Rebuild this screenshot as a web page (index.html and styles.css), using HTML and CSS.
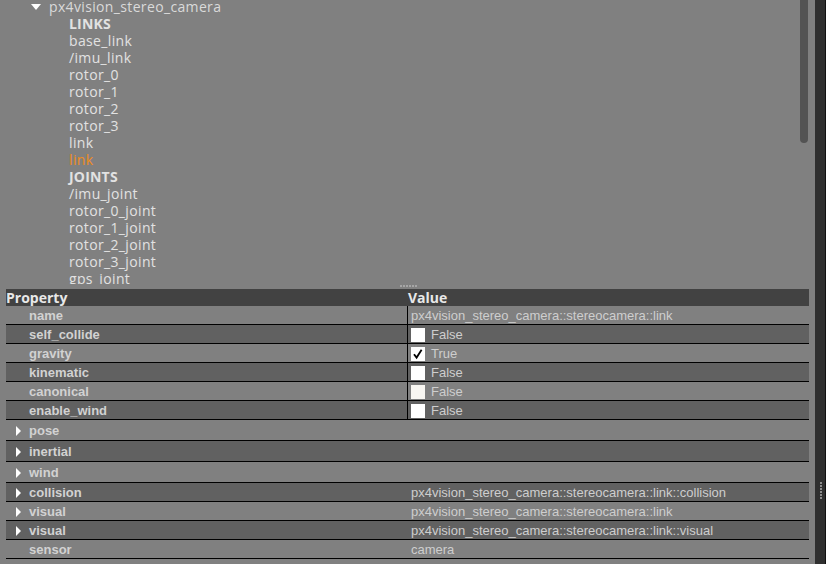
FILE: index.html
```html
<!DOCTYPE html>
<html lang="en">
    <head>
        <meta charset="UTF-8">
        <title> Model editor </title>
        <link rel="stylesheet" href="styles.css">
    </head>

    <body>
        <div class="window">
            <div class="main">
                <div class="tree">
                    <ul class="tree-list">
                        <li class="model"><span class="caret"></span>px4vision_stereo_camera</li>
                        <li class="item heading">LINKS</li>
                        <li class="item">base_link</li>
                        <li class="item">/imu_link</li>
                        <li class="item">rotor_0</li>
                        <li class="item">rotor_1</li>
                        <li class="item">rotor_2</li>
                        <li class="item">rotor_3</li>
                        <li class="item">link</li>
                        <li class="item selected">link</li>
                        <li class="item heading">JOINTS</li>
                        <li class="item">/imu_joint</li>
                        <li class="item">rotor_0_joint</li>
                        <li class="item">rotor_1_joint</li>
                        <li class="item">rotor_2_joint</li>
                        <li class="item">rotor_3_joint</li>
                        <li class="item">gps_joint</li>
                    </ul>
                    <div class="scroll-thumb"></div>
                </div>

                <div class="splitter"><span class="grip"></span></div>

                <div class="props">
                    <div class="prop-head">
                        <div class="col-name">Property</div>
                        <div class="col-value">Value</div>
                    </div>

                    <div class="prop-row split">
                        <div class="col-name">name</div>
                        <div class="col-value">px4vision_stereo_camera::stereocamera::link</div>
                    </div>
                    <div class="prop-row split dark">
                        <div class="col-name">self_collide</div>
                        <div class="col-value"><span class="check"></span>False</div>
                    </div>
                    <div class="prop-row split">
                        <div class="col-name">gravity</div>
                        <div class="col-value">
                            <span class="check">
                                <svg width="14" height="14" viewBox="0 0 14 14"><path d="M3 7.2 L5.6 10.6 L10.6 2.8" fill="none" stroke="#000" stroke-width="1.8"/></svg>
                            </span>True
                        </div>
                    </div>
                    <div class="prop-row split dark">
                        <div class="col-name">kinematic</div>
                        <div class="col-value"><span class="check"></span>False</div>
                    </div>
                    <div class="prop-row split">
                        <div class="col-name">canonical</div>
                        <div class="col-value"><span class="check off"></span>False</div>
                    </div>
                    <div class="prop-row split dark">
                        <div class="col-name">enable_wind</div>
                        <div class="col-value"><span class="check"></span>False</div>
                    </div>

                    <div class="prop-row group">
                        <div class="col-name"><span class="arrow"></span>pose</div>
                        <div class="col-value"></div>
                    </div>
                    <div class="prop-row group dark">
                        <div class="col-name"><span class="arrow"></span>inertial</div>
                        <div class="col-value"></div>
                    </div>
                    <div class="prop-row group">
                        <div class="col-name"><span class="arrow"></span>wind</div>
                        <div class="col-value"></div>
                    </div>
                    <div class="prop-row dark">
                        <div class="col-name"><span class="arrow"></span>collision</div>
                        <div class="col-value">px4vision_stereo_camera::stereocamera::link::collision</div>
                    </div>
                    <div class="prop-row">
                        <div class="col-name"><span class="arrow"></span>visual</div>
                        <div class="col-value">px4vision_stereo_camera::stereocamera::link</div>
                    </div>
                    <div class="prop-row dark">
                        <div class="col-name"><span class="arrow"></span>visual</div>
                        <div class="col-value">px4vision_stereo_camera::stereocamera::link::visual</div>
                    </div>
                    <div class="prop-row">
                        <div class="col-name">sensor</div>
                        <div class="col-value">camera</div>
                    </div>
                </div>
            </div>

            <div class="side"><span class="side-grip"></span></div>
        </div>
    </body>
</html>
```

FILE: styles.css
```css
* {
    padding: 0;
    margin: 0;
    box-sizing: border-box;
}

body {
    background: #808080;
    width: 826px;
    height: 564px;
    overflow: hidden;
}

.window {
    display: flex;
    height: 564px;
}

.main {
    width: 815px;
    display: flex;
    flex-direction: column;
}

/* model tree */

.tree {
    position: relative;
    height: 284px;
    overflow: hidden;
}

.tree-list {
    list-style: none;
    margin-top: -2px;
    font-family: "Open Sans", "DejaVu Sans", sans-serif;
    font-size: 14px;
    letter-spacing: 0.35px;
    line-height: 17px;
    color: #e2e2e2;
}

.model {
    display: flex;
    align-items: center;
    padding-left: 31px;
    color: #dadada;
}

.caret {
    width: 0;
    height: 0;
    border-top: 6px solid #fff;
    border-left: 5px solid transparent;
    border-right: 5px solid transparent;
    margin-right: 8px;
    margin-top: 1px;
}

.item {
    padding-left: 69px;
}

.item.heading {
    font-weight: bold;
    letter-spacing: 0.2px;
}

.item.selected {
    color: #ef8d22;
}

.scroll-thumb {
    position: absolute;
    left: 800px;
    top: 0;
    width: 8px;
    height: 143px;
    background: #535353;
    border-radius: 0 0 4px 4px;
}

.splitter {
    height: 5px;
    padding-left: 400px;
    padding-top: 1px;
}

.grip {
    display: block;
    width: 17px;
    height: 2px;
    background: repeating-linear-gradient(to right, #a6a6a6 0 2px, transparent 2px 3px);
}

/* property table */

.props {
    margin-left: 6px;
    width: 803px;
    font-family: "Liberation Sans", Arial, sans-serif;
    font-size: 13px;
}

.prop-head {
    display: grid;
    grid-template-columns: 401px 1fr;
    height: 17px;
    background: #424242;
    color: #e8e8e8;
    font-family: "Open Sans", "DejaVu Sans", sans-serif;
    font-weight: bold;
    font-size: 14px;
    line-height: 17px;
}

.prop-head .col-value {
    padding-left: 1px;
}

.prop-row {
    display: grid;
    grid-template-columns: 401px 1fr;
    height: 19px;
    border-bottom: 1px solid #000;
    line-height: 18px;
}

.prop-row.group {
    height: 21px;
    line-height: 20px;
}

.prop-row.dark {
    background: #616161;
}

.prop-row .col-name {
    display: flex;
    align-items: center;
    padding-left: 23px;
    padding-top: 1px;
    font-weight: bold;
    color: #d2d2d2;
}

.prop-row .col-value {
    display: flex;
    align-items: center;
    padding-left: 4px;
    padding-top: 1px;
    color: #cecece;
    white-space: nowrap;
}

.prop-row.split .col-value {
    border-left: 1px solid #000;
    padding-left: 3px;
}

.arrow {
    width: 0;
    height: 0;
    border-left: 5px solid #fff;
    border-top: 5px solid transparent;
    border-bottom: 5px solid transparent;
    margin-left: -13px;
    margin-right: 8px;
}

.check {
    display: inline-block;
    width: 14px;
    height: 14px;
    background: #fff;
    margin-right: 6px;
}

.check.off {
    background: #f8f6f2;
}

.check svg {
    display: block;
}

/* right dock strip */

.side {
    width: 11px;
    background: #2f2f2f;
    border-right: 1px solid #111;
    padding-top: 482px;
    padding-left: 5px;
}

.side-grip {
    display: block;
    width: 2px;
    height: 17px;
    background: repeating-linear-gradient(to bottom, #8c8c8c 0 2px, transparent 2px 3px);
}
```
